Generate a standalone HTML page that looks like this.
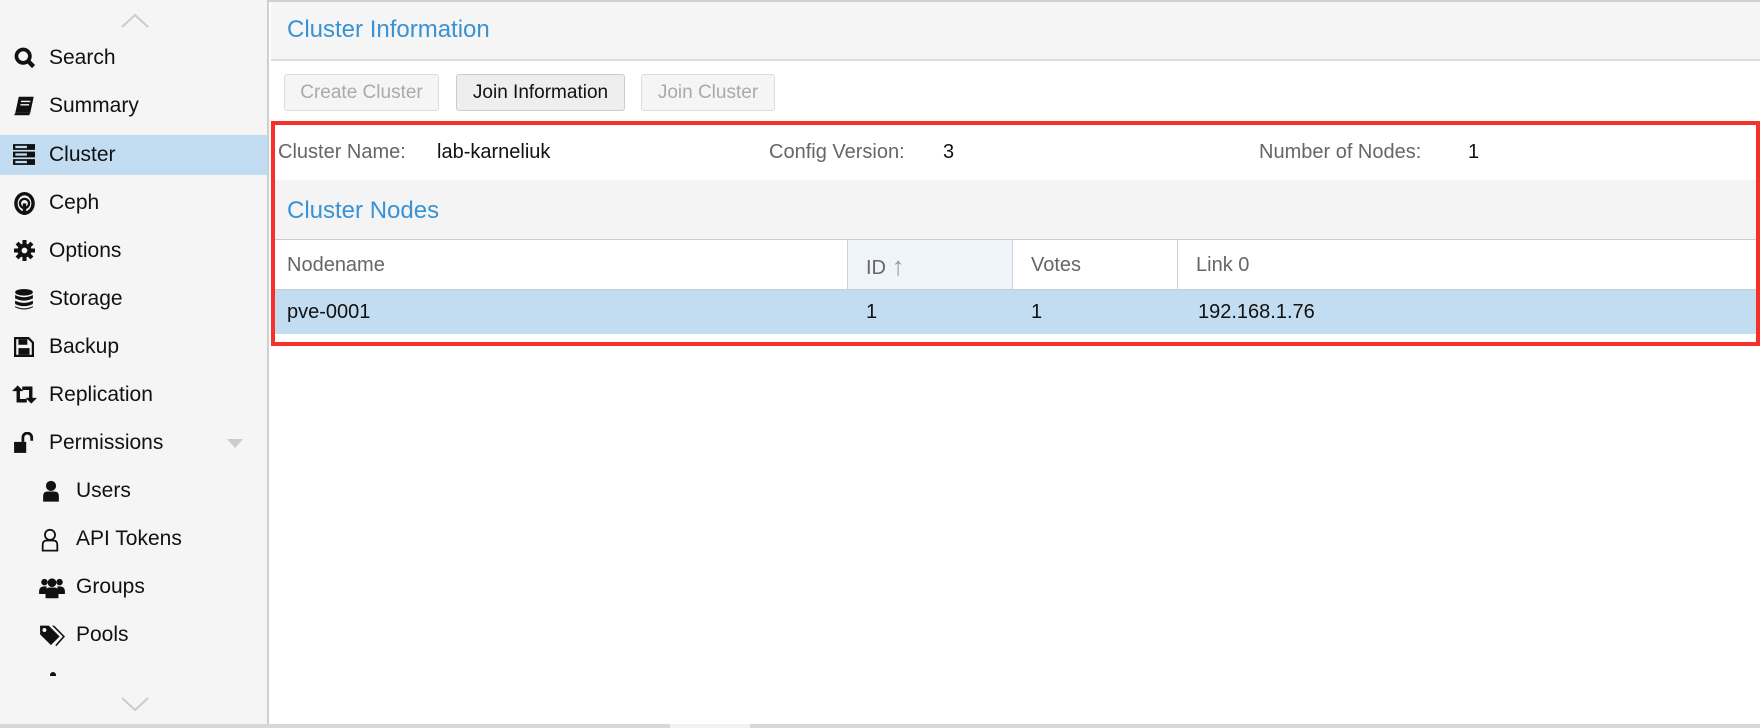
<!DOCTYPE html>
<html><head><meta charset="utf-8"><style>
*{box-sizing:border-box;margin:0;padding:0}
body{width:1760px;height:728px;overflow:hidden;background:#fff;font-family:"Liberation Sans",Helvetica,Arial,sans-serif;position:relative;color:#111}
.abs{position:absolute}
#side{left:0;top:0;width:269px;height:728px;background:#f5f5f5;border-right:2px solid #d0d0d0}
.it{position:absolute;left:0;width:267px;height:40px;font-size:21px;line-height:40px;color:#111}
.it .t{position:absolute;left:49px;top:0}
.it.sub .t{left:76px}
.it svg{position:absolute;top:9px}
.sel{background:#c2ddf2}
.btn{position:absolute;top:74px;height:37px;border:1px solid #ddd;border-radius:3px;background:#f5f5f5;font-size:19px;line-height:35px;text-align:center;color:#aaa}
.lbl{position:absolute;top:141px;font-size:20px;color:#666}
.val{position:absolute;top:141px;font-size:20px;color:#111}
.hd{position:absolute;top:240px;height:50px;border-bottom:1px solid #ccc;border-right:1px solid #d0d0d0;font-size:20px;color:#666;line-height:50px;padding-left:18px}
.cell{position:absolute;top:290px;height:44px;font-size:20px;line-height:44px;color:#111}
</style></head><body>
<div class="abs" style="left:0;top:0;width:1760px;height:2px;background:#d0d0d0"></div>
<div id="side" class="abs">
<svg class="abs" style="left:121px;top:14px" width="28" height="14" viewBox="0 0 28 14"><path d="M1 13 L14 1 L27 13" fill="none" stroke="#ccc" stroke-width="2"/></svg>
<div class="it" style="top:38px"><svg style="left:14px" width="22" height="22" viewBox="0 0 18 18"><circle cx="7.5" cy="7.5" r="5.5" fill="none" stroke="#111" stroke-width="3"/><path d="M11 11 L16 16" stroke="#111" stroke-width="3.5"/></svg><span class="t">Search</span></div>
<div class="it" style="top:86px"><svg style="left:13px" width="23" height="22" viewBox="0 0 20 18"><path d="M5 1 H18 L15 15 H2 Z" fill="#111"/><path d="M2 15 H15 L14 17 H1Z" fill="#111"/><path d="M7 5H15M6.5 8H14" stroke="#f5f5f5" stroke-width="1.2"/></svg><span class="t">Summary</span></div>
<div class="it sel" style="top:135px"><svg style="left:13px" width="22" height="21" viewBox="0 0 19 18"><rect x="0" y="0" width="19" height="5" fill="#111"/><rect x="0" y="6.5" width="19" height="5" fill="#111"/><rect x="0" y="13" width="19" height="5" fill="#111"/><rect x="2" y="1.5" width="10" height="2" fill="#c2ddf2"/><rect x="2" y="8" width="10" height="2" fill="#c2ddf2"/><rect x="2" y="14.5" width="10" height="2" fill="#c2ddf2"/></svg><span class="t">Cluster</span></div>
<div class="it" style="top:183px"><svg style="left:13px" width="23" height="24" viewBox="0 0 20 21"><ellipse cx="10" cy="10" rx="7.5" ry="8.5" fill="none" stroke="#111" stroke-width="3"/><circle cx="10" cy="10" r="4" fill="none" stroke="#111" stroke-width="2"/><rect x="8.5" y="10" width="3" height="10" fill="#111"/></svg><span class="t">Ceph</span></div>
<div class="it" style="top:231px"><svg style="left:14px" width="21" height="21" viewBox="0 0 18 18"><circle cx="9" cy="9" r="6" fill="#111"/><g stroke="#111" stroke-width="3.5"><path d="M9 0V18M0 9H18M2.6 2.6L15.4 15.4M15.4 2.6L2.6 15.4"/></g><circle cx="9" cy="9" r="2.5" fill="#f5f5f5"/></svg><span class="t">Options</span></div>
<div class="it" style="top:279px"><svg style="left:14px" width="20" height="23" viewBox="0 0 18 20"><ellipse cx="9" cy="3.5" rx="8" ry="3" fill="#111"/><path d="M1 6 Q9 10 17 6V9Q9 13 1 9Z M1 11 Q9 15 17 11V14Q9 18 1 14Z M1 16Q9 20 17 16V17Q9 21 1 17Z" fill="#111"/></svg><span class="t">Storage</span></div>
<div class="it" style="top:327px"><svg style="left:14px" width="20" height="22" viewBox="0 0 18 18"><path d="M1 1H13L17 5V17H1Z" fill="none" stroke="#111" stroke-width="2"/><rect x="4" y="2" width="8" height="5" fill="#111"/><rect x="4" y="10" width="10" height="6" fill="#111"/></svg><span class="t">Backup</span></div>
<div class="it" style="top:375px"><svg style="left:12px" width="25" height="21" viewBox="0 0 22 18"><path d="M5 1 L10 6H7V13H13V16H4V6H0Z M17 17 L12 12H15V5H9V2H18V12H22Z" fill="#111"/></svg><span class="t">Replication</span></div>
<div class="it" style="top:423px"><svg style="left:13px" width="22" height="22" viewBox="0 0 20 20"><rect x="1" y="9" width="11" height="10" fill="#111"/><path d="M9 9V5A4 4 0 0 1 17 5V8" fill="none" stroke="#111" stroke-width="2.5"/></svg><span class="t">Permissions</span><svg style="left:227px;top:16px" width="16" height="10" viewBox="0 0 16 10"><path d="M0 0H16L8 9Z" fill="#ccc"/></svg></div>
<div class="it sub" style="top:471px"><svg style="left:42px" width="18" height="23" viewBox="0 0 16 20"><circle cx="8" cy="5" r="4.5" fill="#111"/><path d="M1 19V14Q1 10 5 10H11Q15 10 15 14V19Z" fill="#111"/></svg><span class="t">Users</span></div>
<div class="it sub" style="top:519px"><svg style="left:41px" width="18" height="25" viewBox="0 0 16 22"><circle cx="8" cy="6" r="4.5" fill="none" stroke="#111" stroke-width="1.6"/><path d="M1.5 20V15Q1.5 11 5 11H11Q14.5 11 14.5 15V20Z" fill="none" stroke="#111" stroke-width="1.6"/></svg><span class="t">API Tokens</span></div>
<div class="it sub" style="top:567px"><svg style="left:38px" width="28" height="23" viewBox="0 0 26 20"><circle cx="6" cy="5" r="3" fill="#111"/><circle cx="20" cy="5" r="3" fill="#111"/><circle cx="13" cy="5.5" r="4" fill="#111"/><path d="M1 14Q1 9 6 9H8V16H1Z M25 14Q25 9 20 9H18V16H25Z" fill="#111"/><path d="M7 20V14Q7 10 11 10H15Q19 10 19 14V20Z" fill="#111"/></svg><span class="t">Groups</span></div>
<div class="it sub" style="top:615px"><svg style="left:39px" width="26" height="25" viewBox="0 0 24 22"><path d="M1 1H9L19 11L11 19L1 9Z" fill="#111"/><circle cx="5" cy="5" r="1.8" fill="#f5f5f5"/><path d="M12 1H14L24 11L16 20L15 19L22 11Z" fill="#111"/></svg><span class="t">Pools</span></div>
<div class="abs" style="left:50px;top:672px;width:6px;height:4px;background:#111;border-radius:3px 3px 0 0"></div>
<svg class="abs" style="left:121px;top:697px" width="28" height="14" viewBox="0 0 28 14"><path d="M1 1 L14 13 L27 1" fill="none" stroke="#ccc" stroke-width="2"/></svg>
</div>
<div class="abs" style="left:271px;top:2px;width:1489px;height:59px;background:#f5f5f5;border-bottom:2px solid #ddd"></div>
<div class="abs" style="left:287px;top:16px;font-size:24px;color:#3892d4">Cluster Information</div>
<div class="btn" style="left:284px;width:155px">Create Cluster</div>
<div class="btn" style="left:456px;width:169px;background:#eee;border-color:#ccc;color:#111">Join Information</div>
<div class="btn" style="left:641px;width:134px">Join Cluster</div>
<div class="abs" style="left:272px;top:180px;width:1485px;height:60px;background:#f4f4f4;border-bottom:1px solid #ccc"></div>
<div class="abs" style="left:287px;top:197px;font-size:24px;color:#3892d4">Cluster Nodes</div>
<div class="lbl" style="left:278px">Cluster Name:</div>
<div class="val" style="left:437px">lab-karneliuk</div>
<div class="lbl" style="left:769px">Config Version:</div>
<div class="val" style="left:943px">3</div>
<div class="lbl" style="left:1259px">Number of Nodes:</div>
<div class="val" style="left:1468px">1</div>
<div class="hd" style="left:272px;width:576px;padding-left:15px">Nodename</div>
<div class="hd" style="left:848px;width:165px;background:#eef4fa">ID <span style="color:#999;font-size:26px;position:relative;top:1px">&#8593;</span></div>
<div class="hd" style="left:1013px;width:165px">Votes</div>
<div class="hd" style="left:1178px;width:579px;border-right:none">Link 0</div>
<div class="abs" style="left:272px;top:290px;width:1485px;height:44px;background:#c2ddf2"></div>
<div class="cell" style="left:287px">pve-0001</div>
<div class="cell" style="left:866px">1</div>
<div class="cell" style="left:1031px">1</div>
<div class="cell" style="left:1198px">192.168.1.76</div>
<div class="abs" style="left:271px;top:121px;width:1489px;height:225px;border:4px solid #f7302a"></div>
<div class="abs" style="left:0;top:724px;width:1760px;height:4px;background:#d8d8d8"></div>
<div class="abs" style="left:670px;top:724px;width:80px;height:4px;background:#f2f2f2"></div>
</body></html>
